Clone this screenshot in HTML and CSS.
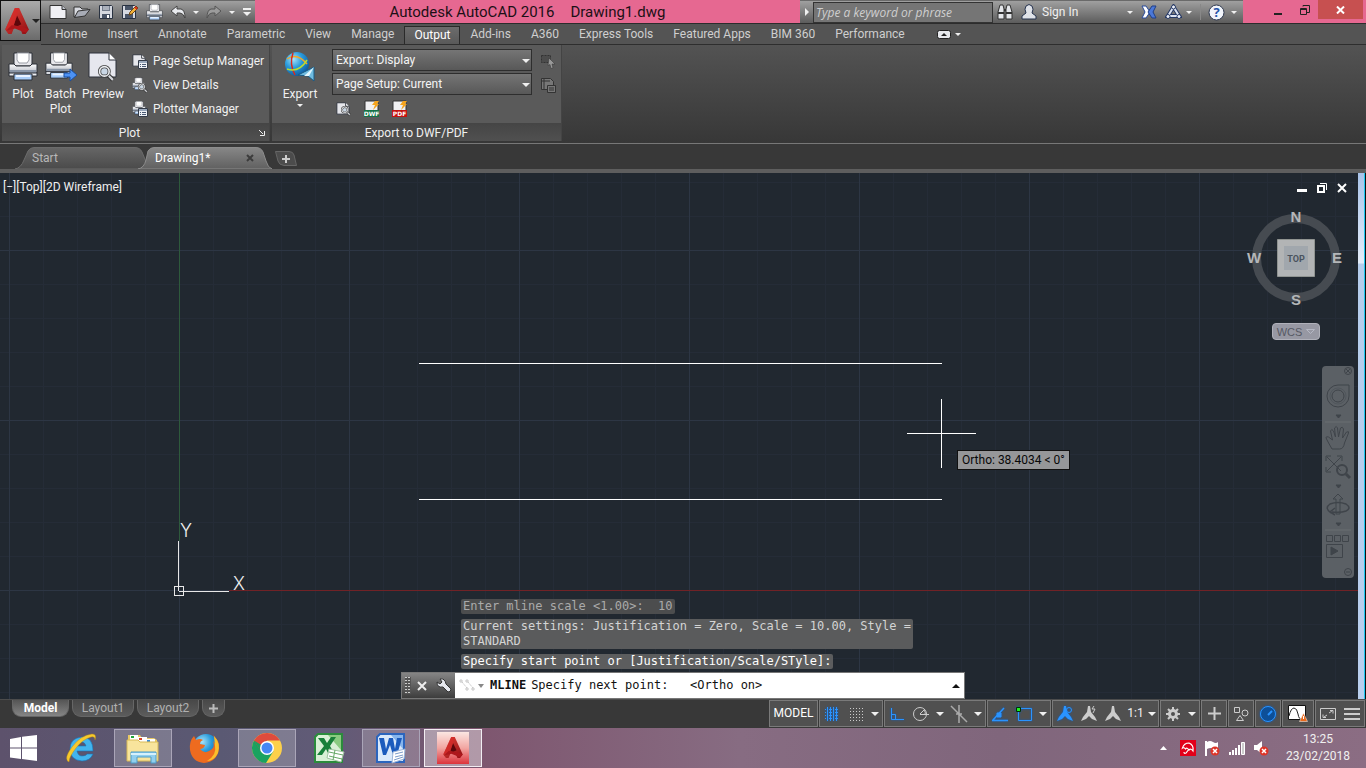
FILE: index.html
```html
<!DOCTYPE html>
<html lang="en">
<head>
  <meta charset="UTF-8">
  <title>Autodesk AutoCAD 2016 - Drawing1.dwg</title>
  <link rel="stylesheet" href="styles.css">
</head>
<body>
<!-- shared icon shapes and gradients -->
<svg class="defs" width="0" height="0" aria-hidden="true">
  <defs>
    <linearGradient id="silver" x1="0" y1="0" x2="0" y2="1">
      <stop offset="0" stop-color="#ffffff"/><stop offset="1" stop-color="#b4b8c2"/>
    </linearGradient>
    <linearGradient id="tabOff" x1="0" y1="0" x2="0" y2="1">
      <stop offset="0" stop-color="#666666"/><stop offset="1" stop-color="#4a4a4a"/>
    </linearGradient>
    <linearGradient id="tabOn" x1="0" y1="0" x2="0" y2="1">
      <stop offset="0" stop-color="#878787"/><stop offset="1" stop-color="#606060"/>
    </linearGradient>
    <linearGradient id="red" x1="0" y1="0" x2="1" y2="1">
      <stop offset="0" stop-color="#e8463c"/><stop offset="1" stop-color="#8e0d12"/>
    </linearGradient>
    <radialGradient id="globe" cx=".35" cy=".3" r=".8">
      <stop offset="0" stop-color="#a5e3fa"/><stop offset=".45" stop-color="#2a9bdc"/><stop offset="1" stop-color="#0b4f94"/>
    </radialGradient>
  </defs>
  <symbol id="printer" viewBox="0 0 30 30">
    <path d="M6 1h18v13H6z" fill="#e8e8ec" stroke="#2a2e36"/>
    <path d="M9 1v7l2 3h8l2-3V1z" fill="#fff" stroke="#9a9da5"/>
    <path d="M1 12h5l2 2h14l2-2h5v9H1z" fill="url(#silver)" stroke="#2a2e36"/>
    <path d="M2 18h26v4H2z" fill="#8b97a8"/><path d="M1 21h28v3H1z" fill="#eceef2" stroke="#2a2e36"/>
    <path d="M6 22h18v6H6z" fill="#a9cdf8" stroke="#2a2e36"/><path d="M8 23h14v2H8z" fill="#eaf3ff"/>
  </symbol>
  <symbol id="lens" viewBox="0 0 16 16">
    <path d="M9 9l5 5" stroke="#333" stroke-width="4"/><path d="M9 9l5 5" stroke="#d5d7dc" stroke-width="2"/>
    <circle cx="6" cy="6" r="4.500" fill="#c9d6e4" stroke="#444" stroke-width="3"/><circle cx="6" cy="6" r="4.500" fill="none" stroke="#eceef2" stroke-width="1.500"/>
  </symbol>
  <symbol id="page" viewBox="0 0 16 16">
    <path d="M1 2h10l4 4v9H1z" fill="#e6e7ec" stroke="#2c303a"/><path d="M11 2v4h4" fill="#fff" stroke="#2c303a"/>
  </symbol>
  <symbol id="list" viewBox="0 0 10 9">
    <path d="M.5.5h9v8h-9z" fill="#eef1f6" stroke="#333b48"/><path d="M1 1h8v2H1z" fill="#9aa9bd"/><path d="M2 4.500h1M4 4.500h4M2 6.500h1M4 6.500h4" stroke="#4a5a74"/>
  </symbol>
  <symbol id="logoA" viewBox="0 0 24 26">
    <path d="M10 1h4l9 20-3 4h-3l-2-5-3-1-3 1-2 5H4l-3-4z" fill="url(#red)"/>
    <path d="M12 8l4 8-4 2-3-1z" fill="#5c070b"/><path d="M10 1L1 21l8-4 3-9 2-7z" fill="#d32a28" opacity=".7"/><path d="M7 17l10 1 6 3-3 3-10-4-8 2z" fill="#ad171b"/>
  </symbol>
  <symbol id="man" viewBox="0 0 18 18">
    <path d="M8 1h2l1 6 4 5 2 4-5-2-3-3-3 3-5 2 2-4 4-5z" fill="currentColor"/>
  </symbol>
</svg>

<header class="top">
  <button class="app-button" aria-label="Application menu">
    <svg width="26" height="28"><use href="#logoA"/></svg><i class="arrow dark"></i>
  </button>
  <div class="title-bar">
    <div class="quick">
      <button aria-label="New"><svg width="18" height="16" viewBox="0 0 18 16"><path d="M1 1.500h12l4 4v9H1z" fill="#f0f0f4" stroke="#333"/><path d="M13 1.500v4h4" fill="#bfc3cc" stroke="#333"/></svg></button>
      <button aria-label="Open"><svg width="18" height="16" viewBox="0 0 18 16"><path d="M1 13V3h6l2 2h6v3z" fill="#d8dae0" stroke="#333"/><path d="M1.500 13.500L5 7l12-1.500-5 6.500z" fill="#a8acb6" stroke="#333"/></svg></button>
      <button aria-label="Save"><svg width="16" height="16" viewBox="0 0 16 16"><path d="M1.500 1.500h12l1 1v12h-13z" fill="#d5d8e0" stroke="#293241"/><path d="M4 2h8v5H4z" fill="#727b8b"/><path d="M5 3h6M5 5h6" stroke="#e4e7ec"/><path d="M4 10h8v4H4z" fill="#4a5568"/><path d="M9 11h2v3H9z" fill="#fff"/></svg></button>
      <button aria-label="Save As"><svg width="18" height="16" viewBox="0 0 18 16"><path d="M1.500 1.500h12l1 1v12h-13z" fill="#d5d8e0" stroke="#293241"/><path d="M4 2h8v4H4zM4 10h8v4H4z" fill="#4a5568"/><path d="M8 11l1-3 6-6 2 2-6 6z" fill="#f5b33a" stroke="#6b4513"/><path d="M14 3l2 2" stroke="#d42a1c" stroke-width="2"/></svg></button>
      <button aria-label="Plot"><svg width="17" height="17"><use href="#printer"/></svg></button>
      <button aria-label="Undo"><svg width="16" height="14" viewBox="0 0 16 14"><path d="M1 6l6-5v3h4q4 1 4 9-2-5-5-5H7v3z" fill="#e8eaee" stroke="#444"/></svg></button>
      <button class="slim" aria-label="Undo history"><i class="arrow"></i></button>
      <button aria-label="Redo"><svg width="16" height="14" viewBox="0 0 16 14"><path d="M15 6L9 1v3H5Q1 5 1 13q2-5 5-5h3v3z" fill="#9b9b9b" stroke="#555"/></svg></button>
      <button class="slim" aria-label="Redo history"><i class="arrow"></i></button>
      <button class="customize" aria-label="Customize toolbar"><i class="arrow big"></i></button>
    </div>
    <h1 class="title"><span>Autodesk AutoCAD 2016</span><span>Drawing1.dwg</span></h1>
    <div class="info">
      <button class="expand" aria-label="Collapse search"><i class="arrow right"></i></button>
      <input type="text" placeholder="Type a keyword or phrase" aria-label="Search">
      <button aria-label="Search"><svg width="16" height="16" viewBox="0 0 16 16"><path d="M3 1h3l1 4v10H1V8zM13 1h-3L9 5v10h6V8z" fill="#e4e6ea" stroke="#333"/><path d="M1 9h6M9 9h6M7 6h2" stroke="#333" stroke-width="2"/></svg></button>
      <button class="sign-in"><svg width="16" height="16" viewBox="0 0 16 16"><path d="M5 9Q3 5 5 2q3-3 6 0 2 3 0 7l4 3v3H1v-3z" fill="#dfe2e8" stroke="#25324d"/></svg>Sign In<i class="arrow"></i></button>
      <button aria-label="Exchange apps"><svg width="16" height="16" viewBox="0 0 16 16"><path d="M1 2h4l4 6-4 6H1l3-6z" fill="#fff" stroke="#294b9b"/><path d="M15 2h-4L7 8l4 6h4l-3-6z" fill="#4b78d8" stroke="#203f86"/></svg></button>
      <button class="a360" aria-label="Stay connected"><svg width="17" height="16" viewBox="0 0 17 16"><path d="M8.500 3L3 12h11z" fill="none" stroke="#263965" stroke-width="4"/><path d="M8.500 3L3 12h11z" fill="none" stroke="#dde4f2" stroke-width="2"/><g fill="#eef2fa" stroke="#263965"><circle cx="8.500" cy="3" r="2"/><circle cx="3" cy="12.500" r="2"/><circle cx="14" cy="12.500" r="2"/></g></svg><i class="arrow"></i></button>
      <button class="help" aria-label="Help"><svg width="17" height="17" viewBox="0 0 17 17"><circle cx="8.500" cy="8.500" r="7.500" fill="#f2f5fb" stroke="#303a50"/><text x="8.500" y="13" text-anchor="middle" class="help-mark">?</text></svg><i class="arrow"></i></button>
    </div>
    <div class="window-buttons">
      <button aria-label="Minimize"><svg width="10" height="10"><path d="M1 8h8v2H1z" fill="#222"/></svg></button>
      <button aria-label="Restore"><svg width="10" height="10" viewBox="0 0 10 10" fill="none" stroke="#222"><path d="M.5 3.500h6v6h-6zM1 4.500h6M3 1.500V.5h6.500v7H7"/></svg></button>
      <button class="close" aria-label="Close"><svg width="9" height="8" viewBox="0 0 9 8"><path d="M1 .5l7 7M8 .5l-7 7" stroke="#fff" stroke-width="2"/></svg></button>
    </div>
  </div>
  <nav class="ribbon-tabs">
    <button>Home</button><button>Insert</button><button>Annotate</button><button>Parametric</button><button>View</button><button>Manage</button><button class="active">Output</button><button>Add-ins</button><button>A360</button><button>Express Tools</button><button>Featured Apps</button><button>BIM 360</button><button>Performance</button>
    <button class="minimize" aria-label="Minimize ribbon"><svg width="14" height="9" viewBox="0 0 14 9"><rect x=".5" y=".5" width="13" height="8" rx="2" fill="#e6e8ec" stroke="#222"/><path d="M4 6l3-3 3 3z" fill="#222"/></svg><i class="arrow"></i></button>
  </nav>
</header>

<section class="ribbon">
  <div class="panel plot">
    <div class="panel-body">
      <button class="large"><svg width="30" height="30"><use href="#printer"/></svg>Plot</button>
      <button class="large batch"><svg width="32" height="30" viewBox="0 0 32 30"><use href="#printer" width="28" height="28"/><path d="M19 21h6v-4l7 6-7 6v-4h-6z" fill="#4c92f5" stroke="#1b4e9e"/></svg>Batch Plot</button>
      <button class="large"><svg width="30" height="30" viewBox="0 0 30 30"><path d="M1 1h20l7 7v17H1z" fill="#e6e7ee" stroke="#2c303a"/><path d="M21 1v7h7" fill="#fff" stroke="#2c303a"/><use href="#lens" x="10" y="13" width="17" height="17"/></svg>Preview</button>
      <ul class="small-buttons">
        <li><button><svg width="16" height="16"><use href="#page" width="14" height="14"/><use href="#list" x="6" y="7" width="10" height="9"/></svg>Page Setup Manager</button></li>
        <li><button><svg width="16" height="16"><use href="#printer" width="13" height="14"/><use href="#lens" x="6" y="6" width="10" height="10"/></svg>View Details</button></li>
        <li><button><svg width="16" height="16"><use href="#printer" width="14" height="14"/><use href="#list" x="6" y="7" width="10" height="9"/></svg>Plotter Manager</button></li>
      </ul>
    </div>
    <div class="panel-title">Plot<svg class="launcher" width="6" height="6" viewBox="0 0 6 6"><path d="M0 0l4 4M5.500 1v4.500H1" fill="none" stroke="#eee"/></svg></div>
  </div>
  <div class="panel export">
    <div class="panel-body">
      <button class="large"><svg width="32" height="32" viewBox="0 0 32 32"><circle cx="13" cy="13" r="12" fill="url(#globe)"/><path d="M3 8q10-7 20 5" fill="none" stroke="#f6a623" stroke-width="1.500"/><path d="M9 2q-4 11 2 22" fill="none" stroke="#d92a1f" stroke-width="1.500"/><path d="M3 18q12 4 20-9" fill="none" stroke="#b9dd33" stroke-width="1.500"/><path d="M14 24l16-8v14l-6-5z" fill="#6fbbe0" stroke="#195b86"/><path d="M20 25l10-9-5 9z" fill="#e1f6fd"/></svg>Export<i class="arrow"></i></button>
      <div class="export-options">
        <label class="select"><select aria-label="What to export"><option>Export: Display</option></select></label>
        <label class="select"><select aria-label="Page setup"><option>Page Setup: Current</option></select></label>
        <div class="export-tools">
          <button aria-label="Preview"><svg width="16" height="16"><use href="#page" width="14" height="14"/><use href="#lens" x="5" y="5" width="10" height="10"/></svg></button>
          <button aria-label="DWF"><svg width="16" height="17" viewBox="0 0 16 17"><path d="M1 1h13v11H1z" fill="#f0f0f2" stroke="#333"/><path d="M11 1l4 0-2 3h2l-6 6 2-5H8z" fill="#f6a41c"/><path d="M0 10h15v7H0z" fill="#157347"/><text x="7.500" y="16" class="badge">DWF</text></svg></button>
          <button aria-label="PDF"><svg width="16" height="17" viewBox="0 0 16 17"><path d="M1 1h13v11H1z" fill="#f0f0f2" stroke="#333"/><path d="M11 1l4 0-2 3h2l-6 6 2-5H8z" fill="#f6a41c"/><path d="M0 10h15v7H0z" fill="#c4120f"/><text x="7.500" y="16" class="badge">PDF</text></svg></button>
        </div>
      </div>
      <div class="export-side">
        <button aria-label="Pick window" disabled><svg width="16" height="16" viewBox="0 0 16 16"><path d="M1.500 2.500h9v7h-9z" fill="#4c4c4c" stroke="#333" stroke-dasharray="2 1"/><path d="M9 5l6 6h-3l1 4-2 .5-1-4-2 1z" fill="#999" stroke="#333" stroke-width=".5"/></svg></button>
        <button aria-label="Page setup override" disabled><svg width="16" height="16" viewBox="0 0 16 16" fill="#777" stroke="#333"><path d="M1.500 1.500h9l3 3v8h-12zM4 2v10M2 4h8"/><path d="M7.500 8.500h8v7h-8zM9 11h5M9 13h5"/></svg></button>
      </div>
    </div>
    <div class="panel-title">Export to DWF/PDF</div>
  </div>
</section>

<nav class="file-tabs">
  <button class="file-tab"><svg class="tab-shape" viewBox="0 0 134 22" preserveAspectRatio="none"><path d="M0 22Q6 21 9 13L13 4Q15 .5 19 .5H120Q125 .5 127 5L134 22z" fill="url(#tabOff)" stroke="#6b6b6b"/></svg><span>Start</span></button>
  <button class="file-tab active"><svg class="tab-shape" viewBox="0 0 134 22" preserveAspectRatio="none"><path d="M0 22Q6 21 8 13L10 4Q12 .5 16 .5H118Q123 .5 125 5L128 14Q130 21 134 22z" fill="url(#tabOn)" stroke="#8c8c8c"/></svg><span>Drawing1*</span><svg width="8" height="8" viewBox="0 0 8 8"><path d="M1 1l6 6M7 1L1 7" stroke="#3c3c3c" stroke-width="2"/></svg></button>
  <button class="new-tab" aria-label="New drawing"><svg width="22" height="15" viewBox="0 0 22 15"><path d="M.5.5H14Q18 .5 19 4L21.500 14.500H9Q4 14 3 10z" fill="#4c4c4c" stroke="#666"/><path d="M11 4v8M7 8h8" stroke="#ccc" stroke-width="2"/></svg></button>
</nav>

<main class="workspace">
  <div class="canvas">
    <svg class="drawing" width="100%" height="100%" fill="none" shape-rendering="crispEdges">
      <path d="M179.500 0v368" stroke="#2e5a3c"/>
      <line x1="229" y1="417.500" x2="100%" y2="417.500" stroke="#712226"/>
      <g stroke="#fff">
        <path d="M419 190.500h523M419 326.500h523"/>
        <path d="M941.500 226v69M907 260.500h69"/>
      </g>
      <!-- UCS icon -->
      <path d="M178.500 368v50M179 418.500h50M174.500 413.500h9v9h-9z" stroke="#e8e8e8"/>
      <text x="186" y="364" class="axis">Y</text>
      <text x="239" y="417" class="axis">X</text>
    </svg>
    <div class="view-label">[−][Top][2D Wireframe]</div>
    <div class="view-buttons">
      <button aria-label="Minimize view"><svg width="12" height="12"><path d="M1 7h10v3H1z" fill="#fff"/></svg></button>
      <button aria-label="Restore view"><svg width="12" height="12" viewBox="0 0 12 12" fill="none" stroke="#fff"><path d="M2 4h6v6H2z" stroke-width="2"/><path d="M4 1.500h6.500V8"/></svg></button>
      <button aria-label="Close view"><svg width="12" height="12"><path d="M2 2l8 8M10 2l-8 8" stroke="#fff" stroke-width="2"/></svg></button>
    </div>
    <div class="view-cube">
      <svg width="110" height="104" viewBox="0 0 110 104">
        <circle cx="55" cy="52" r="39.500" fill="none" stroke="#464b51" stroke-width="9"/>
        <path d="M36.500 33.500h37v37h-37z" fill="#b2b4b5" stroke="#909491"/><path d="M43 40h24v24H43z" fill="#a1a7ad"/>
        <text x="55" y="56" class="cube-face">TOP</text>
        <g class="compass"><text x="55" y="16">N</text><text x="96" y="57">E</text><text x="55" y="99">S</text><text x="13" y="57">W</text></g>
      </svg>
      <button class="wcs">WCS<svg width="9" height="5" viewBox="0 0 9 5"><path d="M.5.5h8l-4 4z" fill="none" stroke="#b5b8c4"/></svg></button>
    </div>
    <div class="nav-bar">
      <svg width="32" height="212" viewBox="0 0 32 212" fill="none" stroke="#3f444a">
        <circle cx="26" cy="5" r="3.500"/><path d="M24 3l4 4M28 3l-4 4"/>
        <path d="M16 19h11v11a11 11 0 1 1-11-11z"/><circle cx="16" cy="30" r="6"/><circle cx="16" cy="30" r="8" stroke="#50565c"/>
        <path d="M14 49h5l-2.500 3zM14 119h5l-2.500 3zM14 157h5l-2.500 3z" fill="#3f444a"/>
        <path d="M3 56h26M3 164h26" stroke="#6a6e72"/>
        <path d="M10 83Q6 76 4.500 73t2-2l4 3-2-9q1-3 3 0l2 6-1-9q2-3 3 0l1 9 2-9q2-2 3 1l-1 9 4-6q3-1 2 1l-4 10q-1 6-5 6z"/>
        <path d="M5 91l14 14M19 91L5 105M4 95v-5h5M15 90h5v5M4 101v5h5"/><circle cx="20" cy="104" r="5" stroke-width="2"/><path d="M24 108l4 4" stroke-width="3"/>
        <path d="M14 148v-15h-3l5-5 5 5h-3v15z"/><path d="M9 147Q2 142 8 138q8-3 16 0 6 4 0 7-5 2-14 1M13 142l-5 4 5 3" stroke-width="1.500"/>
        <path d="M4.500 169.500h6v6h-6zM12.500 169.500h6v6h-6zM20.500 169.500h6v6h-6zM4.500 178.500h16v13h-16z"/><path d="M9 181l7 4-7 4z" fill="#3f444a"/>
        <circle cx="26" cy="206" r="3.500"/><path d="M24 206h4"/>
      </svg>
    </div>
    <div class="ortho-tip">Ortho: 38.4034 &lt; 0°</div>
    <div class="command">
      <div class="history">
        <p class="old">Enter mline scale &lt;1.00&gt;:&nbsp; 10</p>
        <p class="mid">Current settings: Justification = Zero, Scale = 10.00, Style =<br>STANDARD</p>
        <p>Specify start point or [Justification/Scale/STyle]:</p>
      </div>
      <div class="command-line">
        <div class="handle"></div>
        <button aria-label="Close command line"><svg width="10" height="10"><path d="M1 1l8 8M9 1L1 9" stroke="#eee" stroke-width="2"/></svg></button>
        <button aria-label="Customize"><svg width="16" height="16" viewBox="0 0 16 16"><path d="M1 4l3 2 2-2-2-3q5-1 6 5l5 5q0 3-3 3l-5-5Q1 10 1 4z" fill="#e6e8ee" stroke="#333"/></svg></button>
        <div class="prompt">
          <svg width="26" height="14" viewBox="0 0 26 14" fill="none" stroke="#c8c8c8"><path d="M1 1h2v2H1zM7 1h2v2H7zM7 9h2v2H7zM13 9h2v2h-2z"/><path d="M3 3l5 6M9 3l5 6" stroke-dasharray="2 1"/><path d="M19 5h6l-3 4z" fill="#888" stroke="none"/></svg>
          <b>MLINE</b><span>Specify next point:&nbsp;&nbsp; &lt;Ortho on&gt;</span>
          <i class="arrow up"></i>
        </div>
      </div>
    </div>
  </div>
  <div class="desktop-edge"></div>
</main>

<footer class="status">
  <nav class="layout-tabs">
    <button class="active">Model</button><button>Layout1</button><button>Layout2</button><button class="add" aria-label="New layout"><svg width="9" height="9"><path d="M4.500 0v9M0 4.500h9" stroke="#bbb" stroke-width="2"/></svg></button>
  </nav>
  <div class="status-tools">
    <div class="group"><button>MODEL</button></div>
    <div class="group">
      <button aria-label="Grid"><svg class="glow" width="16" height="16" viewBox="0 0 16 16" stroke="#2a94ff"><path d="M3.500 1v14M6.500 1v14M9.500 1v14M12.500 1v14"/><path d="M1 3.500h14M1 6.500h14M1 9.500h14M1 12.500h14" stroke-dasharray="1 1"/></svg></button>
      <button aria-label="Snap"><svg width="16" height="16" viewBox="0 0 16 16" stroke="#ccc" stroke-dasharray="1 2"><path d="M2 2.500h13M2 5.500h13M2 8.500h13M2 11.500h13M2 14.500h13"/></svg></button>
      <button class="drop" aria-label="Snap settings"><i class="arrow big"></i></button>
    </div>
    <div class="group">
      <button aria-label="Ortho"><svg class="glow" width="16" height="16" viewBox="0 0 16 16" fill="none" stroke="#2a94ff"><path d="M2.500 2v11.500H15M2.500 8.500h4v5"/></svg></button>
      <button aria-label="Polar"><svg width="18" height="16" viewBox="0 0 18 16" fill="none" stroke="#ccc"><circle cx="8" cy="8" r="6.500"/><path d="M8 8.500h9M8 8l5-5M12 4q2 2 1 5"/></svg></button>
      <button class="drop" aria-label="Polar settings"><i class="arrow big"></i></button>
      <button aria-label="Isodraft"><svg width="18" height="20" viewBox="0 0 18 20" stroke="#aaa" stroke-width="1.500"><path d="M1 2l16 16M9 1v18M6 10h6"/></svg></button>
      <button class="drop" aria-label="Isodraft settings"><i class="arrow big"></i></button>
    </div>
    <div class="group">
      <button aria-label="Snap tracking"><svg class="glow" width="18" height="16" viewBox="0 0 18 16" fill="none" stroke="#2a94ff"><path d="M1 14.500h16M2 14L13 2" stroke-width="1.500"/><path d="M6 7h4v4H6z" fill="#2a94ff"/></svg></button>
      <button aria-label="Object snap"><svg class="glow" width="18" height="18" viewBox="0 0 18 18"><path d="M3.500 3.500h13v12h-13z" fill="none" stroke="#2a94ff"/><path d="M1.500 2.500h4v4h-4z" fill="#1ef01e" stroke="#022c02"/></svg></button>
      <button class="drop" aria-label="Object snap settings"><i class="arrow big"></i></button>
    </div>
    <div class="group">
      <button class="blue" aria-label="Annotation visibility"><svg class="glow" width="18" height="18"><use href="#man"/><circle cx="13" cy="5" r="2.500" fill="none" stroke="#2a94ff"/></svg></button>
      <button aria-label="Auto scale"><svg width="18" height="18"><use href="#man"/><path d="M14 1l-2 3h3l-2 4" fill="none" stroke="#ccc"/></svg></button>
      <button aria-label="Annotation scale"><svg width="18" height="18"><use href="#man"/></svg></button>
      <button class="scale">1:1<i class="arrow big"></i></button>
    </div>
    <div class="group">
      <button aria-label="Workspace"><svg width="14" height="14" viewBox="0 0 14 14"><circle cx="7" cy="7" r="3.500" fill="none" stroke="#ccc" stroke-width="3"/><path d="M7 0v3M7 11v3M0 7h3M11 7h3M2 2l2 2M10 10l2 2M12 2l-2 2M4 10l-2 2" stroke="#ccc" stroke-width="2"/></svg></button>
      <button class="drop" aria-label="Workspace settings"><i class="arrow big"></i></button>
    </div>
    <div class="group"><button aria-label="Annotation monitor"><svg width="15" height="15"><path d="M7.500 1v13M1 7.500h13" stroke="#ccc" stroke-width="2"/></svg></button></div>
    <div class="group"><button aria-label="Isolate objects"><svg width="16" height="16" viewBox="0 0 16 16" fill="none" stroke="#ccc"><path d="M1.500 1.500h5v5h-5z"/><circle cx="12" cy="7" r="3"/><path d="M3.500 14.500l3.500-5 3.500 5z"/></svg></button></div>
    <div class="group"><button aria-label="Hardware acceleration"><svg class="glow" width="18" height="18"><circle cx="9" cy="9" r="7.500" fill="#0d4f98" stroke="#2a94ff"/><path d="M9 10l4-4" stroke="#2a94ff" stroke-width="2"/></svg></button></div>
    <div class="group wide"><button aria-label="Performance"><svg width="20" height="17" viewBox="0 0 20 17"><path d="M.5.5h17v14H.5z" fill="#fff" stroke="#111"/><path d="M1 11Q3 3 6 3t4 6 4 5" fill="none" stroke="#222"/><path d="M15.500 8l4 8.500h-8z" fill="#e8691c" stroke="#fff" stroke-width=".5"/><path d="M15.500 11v3" stroke="#fff"/></svg></button></div>
    <div class="group">
      <button aria-label="Clean screen"><svg width="16" height="12" viewBox="0 0 16 12" fill="none" stroke="#ccc"><path d="M.5.5h15v11H.5zM9 5l3-2M10 2.500h3v3M7 7L4 9M3 6.500v3h3"/></svg></button>
      <button aria-label="Customization"><svg width="16" height="12"><path d="M0 1h16M0 6h16M0 11h16" stroke="#ccc" stroke-width="2"/></svg></button>
    </div>
  </div>
</footer>

<div class="taskbar">
  <button class="start" aria-label="Start"><svg width="28" height="26" viewBox="0 0 28 26" fill="#fff"><path d="M0 4l11-2v10.500H0zM12 1.800L27 0v12.500H12zM0 13.500h11V24L0 22.500zM12 13.500h15V26l-15-2z"/></svg></button>
  <button aria-label="Internet Explorer"><svg width="32" height="32" viewBox="0 0 32 32"><path d="M28 19H12q1 5 5 5t5-2h6q-3 7-11 7Q5 28 5 17T17 5q11 0 11 14zM12 14h9q-1-4-4.500-4T12 14z" fill="#42b4ee" stroke="#1676b8" stroke-width=".6"/><path d="M4 30q-6-3 3-15T27 2q5 0 3 6 0-4-4-3-8 2-15 11T4 30z" fill="#f7c92d" stroke="#b98b10" stroke-width=".4"/></svg></button>
  <button class="open" aria-label="File Explorer"><svg width="34" height="32" viewBox="0 0 34 32"><path d="M2 3h12l2 3h12l3 2v20H2z" fill="#e8c965"/><path d="M4 3h8v5H4zM12 5h9v5h-9zM20 7h9v4h-9z" fill="#fff"/><path d="M5 4h3v2H5z" fill="#21a63a"/><path d="M13 6h3v2h-3z" fill="#d84126"/><path d="M21 8h3v2h-3z" fill="#3a8dd8"/><path d="M1 8h11l2 2h18v19H1z" fill="#f8e49c" stroke="#d8b957"/><path d="M5 20h25v11h-5v-6H11v6H5z" fill="#91cfee" stroke="#4c9cc8"/><path d="M5 22h25" stroke="#d6f1fc" stroke-width="2"/></svg></button>
  <button aria-label="Firefox"><svg width="32" height="32" viewBox="0 0 32 32"><circle cx="17" cy="15" r="13" fill="url(#globe)"/><path d="M24 3q7 6 6 14-2 13-15 14Q3 30 1 18 0 9 5 4l2 4q4-2 7 0-3 1-3 4l5 1q-1 4-5 4 4 5 9 2 7-3 4-10 3 3 3 6 1-6-3-12z" fill="#ee6b1f"/><path d="M25 4q7 7 4 17-4 8-11 8 10-6 8-15z" fill="#f9bf2b"/></svg></button>
  <button class="open" aria-label="Chrome"><svg width="32" height="32" viewBox="0 0 32 32"><circle cx="16" cy="16" r="15" fill="#fcd04b"/><path d="M3 8.500A15 15 0 0 0 15 31l7.500-12L16 16z" fill="#1aa260"/><path d="M3 8.500A15 15 0 0 1 29 8.500H16l-6 11z" fill="#df4b3d"/><path d="M3 8.500l7 11 6-3z" fill="#1aa260"/><circle cx="16" cy="16" r="7" fill="#fff"/><circle cx="16" cy="16" r="5.500" fill="#4687f4"/></svg></button>
  <button aria-label="Excel"><svg width="32" height="32" viewBox="0 0 32 32"><path d="M5 2h24v28H2V5z" fill="#d9f0d5" stroke="#2b8b3c" stroke-width="2"/><path d="M15 3h13v15z" fill="#8acb80"/><path d="M5 6h6l3 5 4-6h5l-6 9 5 9h-6l-3-6-4 6H4l7-9z" fill="#188039"/><path d="M16 17l15 3-3 10-14-4z" fill="#fff" stroke="#9fc39f"/><path d="M16 20l14 3M16 24l13 3M22 18l-2 10" stroke="#67a867"/></svg></button>
  <button class="open" aria-label="Word"><svg width="32" height="32" viewBox="0 0 32 32"><path d="M5 2h24v28H2V5z" fill="#d9e9fb" stroke="#2c65bd" stroke-width="2"/><path d="M16 3h12v14z" fill="#86b5ed"/><path d="M4 6h5l2 11 3-11h4l2 11 2-11h5l-5 17h-4l-3-10-4 10H8z" fill="#1b5bbd"/><path d="M18 20l12-3-1 10-12 4z" fill="#fff" stroke="#9db6d8"/><path d="M20 22l8-2M20 25l8-2M19 28l9-3" stroke="#7a9bc9"/></svg></button>
  <button class="open current" aria-label="AutoCAD"><svg width="32" height="32" viewBox="0 0 32 32"><defs><linearGradient id="acad" x1="0" y1="0" x2="0" y2="1"><stop offset="0" stop-color="#fbe6e2"/><stop offset=".5" stop-color="#f2a6a2"/><stop offset="1" stop-color="#dc333b"/></linearGradient></defs><path d="M0 0h32v32H0z" fill="url(#acad)"/><use href="#logoA" x="5" y="4" width="22" height="23"/></svg></button>
  <div class="tray">
    <svg class="show-hidden" width="9" height="6"><path d="M1 5l3.500-4L8 5z" fill="#fff"/></svg>
    <svg width="16" height="16" viewBox="0 0 16 16"><path d="M0 0h16v16H0z" fill="#e2001a"/><path d="M2.500 8Q4 3 9 3q5 2 4 8-2-3-4-1-2-3-3.500-1Q4 7 2.500 8zM9 9l-3 4q-2 1-2-1" fill="none" stroke="#fff" stroke-width="1.200"/></svg>
    <svg width="17" height="16" viewBox="0 0 17 16"><path d="M2 1v15" stroke="#fff" stroke-width="2"/><path d="M3 2q3-2 6 0t5 0v7q-3 2-5 0T3 9z" fill="#fff"/><circle cx="11" cy="11" r="4.500" fill="#dd3528"/><path d="M9 9l4 4M13 9l-4 4" stroke="#fff" stroke-width="1.500"/></svg>
    <svg width="16" height="14" viewBox="0 0 16 14" fill="#fff"><path d="M0 11h2v3H0zM3 9h2v5H3zM6 7h2v7H6zM9 4h2v10H9z"/><path d="M12.500 1.500h3v12h-3z" fill="#ccc" stroke="#fff"/></svg>
    <svg width="17" height="16" viewBox="0 0 17 16"><path d="M1 5h3l5-4v13l-5-4H1z" fill="#fff"/><circle cx="11" cy="11" r="4.500" fill="#dd3528"/><path d="M9 9l4 4M13 9l-4 4" stroke="#fff" stroke-width="1.500"/></svg>
  </div>
  <div class="clock"><time>13:25</time><time>23/02/2018</time></div>
</div>
</body>
</html>
```
FILE: styles.css
```css
* {
  box-sizing: border-box;
}

html, body {
  height: 100%;
}

body {
  margin: 0;
  display: flex;
  flex-direction: column;
  overflow: hidden;
  background: #383838;
  color: #f0f0f0;
  font: 12px/15px Roboto, "Open Sans", sans-serif;
}

h1, p, ul {
  margin: 0;
  padding: 0;
  list-style: none;
}

button {
  display: flex;
  align-items: center;
  justify-content: center;
  margin: 0;
  padding: 0;
  border: 0;
  background: none;
  color: inherit;
  font: inherit;
  white-space: nowrap;
}

svg {
  flex: none;
}

.defs {
  position: absolute;
}

/* small triangles */
.arrow {
  flex: none;
  width: 0;
  height: 0;
  border: 3px solid transparent;
  border-top-color: #f0f0f0;
  border-bottom: 0;
}

.arrow.big {
  border-width: 4px;
  border-bottom: 0;
}

.arrow.dark {
  border-width: 4px;
  border-bottom: 0;
  border-top-color: #222;
}

.arrow.right {
  border: 4px solid transparent;
  border-left-color: #f0f0f0;
  border-right: 0;
}

.arrow.up {
  border: 4px solid transparent;
  border-bottom-color: #111;
  border-top: 0;
}

/* title bar and ribbon tabs */
.top {
  flex: none;
  display: grid;
  grid-template-columns: 41px 1fr;
  grid-template-rows: 24px 21px;
  background: #545454;
}

.app-button {
  grid-row: 1 / 3;
  height: 41px;
  gap: 2px;
  padding-left: 2px;
  border: 1px solid #111;
  background: linear-gradient(#aaaaaa, #6b6b6b);
}

.title-bar {
  display: flex;
  background: #e66891;
  border-bottom: 1px solid #2c2c2c;
}

.quick, .info {
  display: flex;
  align-items: center;
  background: linear-gradient(#a0a0a0, #5c5c5c);
  border-top: 1px solid #6a6a6a;
}

.quick {
  width: 214px;
  padding-left: 5px;
}

.quick button {
  width: 24px;
}

.quick .slim {
  width: 12px;
}

.quick .customize {
  width: 17px;
  flex-direction: column;
}

.customize::before {
  content: "";
  width: 8px;
  height: 2px;
  margin-bottom: 2px;
  background: #f0f0f0;
}

.title {
  flex: 1;
  display: flex;
  justify-content: center;
  gap: 16px;
  color: #1c1016;
  font-size: 15px;
  font-weight: normal;
  line-height: 24px;
}

.info {
  width: 443px;
}

.info .expand {
  width: 13px;
}

.info input {
  width: 180px;
  height: 21px;
  padding: 0 2px;
  border: 1px solid #333;
  background: #757575;
  color: #eee;
  font: italic 12px "Open Sans", sans-serif;
}

.info input::placeholder {
  color: #cfcfcf;
}

.info > button {
  width: 24px;
}

.info .expand {
  width: 13px;
}

.info .sign-in {
  flex: 1;
  gap: 5px;
  padding: 0 4px;
}

.sign-in .arrow {
  margin-left: auto;
}

.info .a360 {
  width: 40px;
  gap: 4px;
  padding-right: 5px;
  border-right: 1px solid #888;
}

.info .help {
  width: 42px;
  gap: 6px;
}

.help-mark {
  fill: #2552a8;
  font: bold 13px "Open Sans", sans-serif;
}

.window-buttons {
  display: flex;
  width: 123px;
  justify-content: flex-end;
  padding-right: 3px;
}

.window-buttons button {
  width: 27px;
  height: 19px;
}

.window-buttons .close {
  width: 45px;
  background: #c75050;
}

.ribbon-tabs {
  display: flex;
  align-items: flex-end;
  padding-left: 4px;
  border-bottom: 1px solid #2e2e2e;
  color: #cfcfcf;
}

.ribbon-tabs button {
  height: 20px;
  padding: 0 9px;
  border: 1px solid transparent;
  border-bottom: 0;
}

.ribbon-tabs .active {
  height: 18px;
  border-color: #2a2a2a;
  background: linear-gradient(#6c6c6c, #595959);
  color: #fff;
}

.ribbon-tabs .minimize {
  gap: 4px;
  margin-left: 12px;
}

/* ribbon */
.ribbon {
  flex: none;
  display: flex;
  height: 99px;
  padding: 0 2px 2px;
  gap: 2px;
  background: linear-gradient(#535353, #373737);
  border-bottom: 1px solid #777;
}

.panel {
  display: flex;
  flex-direction: column;
  background: #5a5a5a;
  border-right: 1px solid #444;
}

.plot {
  width: 268px;
}

.export {
  width: 290px;
}

.panel-body {
  flex: 1;
  display: flex;
  padding-top: 4px;
}

.panel-title {
  position: relative;
  height: 18px;
  background: linear-gradient(#454545, #505050);
  line-height: 20px;
  text-align: center;
}

.plot .panel-title {
  padding-right: 12px;
}

.launcher {
  position: absolute;
  right: 4px;
  bottom: 5px;
}

.large {
  flex-direction: column;
  justify-content: flex-start;
  width: 42px;
  padding-top: 3px;
  white-space: normal;
}

.large svg {
  margin-bottom: 5px;
}

.large.batch {
  width: 33px;
}

.plot .large:nth-child(3) {
  width: 52px;
}

.small-buttons button {
  height: 24px;
  gap: 5px;
  padding-left: 3px;
}

.export .large {
  width: 56px;
}

.export .large svg {
  margin: -1px 0 4px;
}

.export .large .arrow {
  margin-top: 2px;
}

.export-options {
  width: 200px;
  margin-left: 4px;
}

.select {
  display: block;
  position: relative;
  height: 24px;
}

.select::after {
  content: "";
  position: absolute;
  right: 2px;
  top: 10px;
  border: 4px solid transparent;
  border-top-color: #f0f0f0;
  border-bottom: 0;
}

.select select {
  appearance: none;
  display: block;
  width: 100%;
  height: 22px;
  padding: 0 3px;
  border: 1px solid #2e2e2e;
  border-radius: 0;
  background: linear-gradient(#757575, #585858);
  color: #f4f4f4;
  font: inherit;
}

.export-tools {
  display: flex;
  gap: 12px;
  padding: 3px 0 0 4px;
}

.export-side {
  margin-left: 8px;
}

.export-side button {
  height: 24px;
}

.badge {
  fill: #fff;
  font: bold 6px "DejaVu Sans", sans-serif;
  text-anchor: middle;
}

/* drawing tabs */
.file-tabs {
  flex: none;
  display: flex;
  height: 29px;
  padding: 3px 0 0 15px;
  border-bottom: 4px solid #5e5e5e;
  background: #383838;
}

.file-tab {
  position: relative;
  width: 134px;
  height: 22px;
  justify-content: flex-start;
  padding: 0 18px 0 17px;
  color: #b8b8b8;
}

.file-tab + .file-tab {
  margin-left: -11px;
  color: #fff;
}

.file-tab span {
  position: relative;
  flex: 1;
  text-align: left;
}

.file-tab svg {
  position: relative;
}

.file-tab .tab-shape {
  position: absolute;
  left: 0;
  top: 0;
  width: 100%;
  height: 100%;
}

.new-tab {
  margin-left: 3px;
}

/* model space */
.workspace {
  flex: 1;
  display: flex;
  min-height: 0;
}

.canvas {
  flex: 1;
  position: relative;
  overflow: hidden;
  background-color: #212830;
  background-image:
    linear-gradient(90deg, #2d3644 1px, transparent 1px),
    linear-gradient(#2d3644 1px, transparent 1px),
    linear-gradient(90deg, #252c37 1px, transparent 1px),
    linear-gradient(#252c37 1px, transparent 1px);
  background-size: 170px 170px, 170px 170px, 34px 34px, 34px 34px;
  background-position: 9px 0, 0 77px, 9px 0, 0 9px;
}

.drawing {
  position: absolute;
  left: 0;
  top: 0;
}

.axis {
  fill: #f0f0f0;
  font: 300 18px Inter, sans-serif;
  text-anchor: middle;
}

.view-label {
  position: absolute;
  left: 3px;
  top: 7px;
}

.view-buttons {
  position: absolute;
  right: 10px;
  top: 9px;
  display: flex;
  gap: 8px;
}

.view-cube {
  position: absolute;
  right: 7px;
  top: 33px;
  display: flex;
  flex-direction: column;
  align-items: center;
}

.cube-face {
  fill: #4a535e;
  font: bold 9px Roboto, sans-serif;
  text-anchor: middle;
}

.compass text {
  fill: #b4b6b8;
  font: bold 15px "Liberation Sans", sans-serif;
  text-anchor: middle;
}

.wcs {
  width: 48px;
  height: 17px;
  margin-top: 13px;
  gap: 4px;
  border: 1px solid #b0b1ba;
  border-radius: 4px;
  background: #9798a3;
  color: #565963;
  font: 11px "Liberation Sans", sans-serif;
}

.nav-bar {
  position: absolute;
  right: 4px;
  top: 193px;
  height: 212px;
  border-radius: 4px;
  background: #5b6065;
}

.ortho-tip {
  position: absolute;
  left: 957px;
  top: 277px;
  padding: 0 4px;
  border: 1px solid #111;
  background: #969799;
  color: #080808;
  line-height: 18px;
}

/* floating command line */
.command {
  position: absolute;
  left: 401px;
  bottom: 0;
  width: 564px;
  font: 12px/15px "DejaVu Sans Mono", monospace;
}

.history {
  display: flex;
  flex-direction: column;
  align-items: flex-start;
  gap: 5px;
  margin: 0 0 3px 60px;
}

.history p {
  padding: 0 2px;
  border-radius: 2px;
  background: #5c5d5e;
  color: #fff;
  white-space: nowrap;
}

.history .old {
  background: #4c4d4e;
  color: #aaa;
}

.history .mid {
  background: #5a5b5c;
  color: #d4d4d4;
}

.command-line {
  display: flex;
  height: 27px;
  border: 1px solid #777;
  background: linear-gradient(#858585, #3d3d3d);
}

.command-line > button {
  width: 22px;
}

.handle {
  width: 6px;
  margin: 4px 0 4px 3px;
  background: repeating-linear-gradient(transparent 0 1px, #555 1px 3px), repeating-linear-gradient(90deg, #ccc 0 2px, #555 2px 3px);
}

.prompt {
  flex: 1;
  display: flex;
  align-items: center;
  gap: 5px;
  padding: 0 4px;
  background: #fff;
  color: #111;
}

.prompt .arrow {
  margin-left: auto;
}

.desktop-edge {
  width: 8px;
  border-right: 1px solid #111;
  background: linear-gradient(90deg, transparent 6px, #1cc8f0 6px), linear-gradient(#a9c4ea, #e4edf9 90px, #b5cdec 91px, #b9cfee);
}

/* status bar */
.status {
  flex: none;
  display: flex;
  justify-content: space-between;
  height: 29px;
  border-top: 1px solid #4c4c4c;
  background: #383838;
}

.layout-tabs {
  display: flex;
  gap: 3px;
  padding-left: 12px;
  color: #b0b0b0;
}

.layout-tabs button {
  width: 62px;
  height: 17px;
  border-radius: 0 0 9px 9px;
  background: linear-gradient(#484848, #5c5c5c);
  border: 1px solid #666;
  border-top: 0;
}

.layout-tabs .active {
  width: 57px;
  background: linear-gradient(#555, #858585);
  color: #fff;
  font-weight: bold;
}

.layout-tabs .add {
  width: 23px;
}

.status-tools {
  display: flex;
  gap: 1px;
  padding: 0 1px 1px 0;
}

.group {
  display: flex;
  border: 1px solid #7a7a7a;
  background: #505050;
  color: #ccc;
}

.group button {
  width: 24px;
}

.group .drop {
  width: 14px;
}

.group:first-child button {
  width: 47px;
  color: #fff;
}

.group .blue {
  color: #2a94ff;
}

.group .scale {
  width: 33px;
  gap: 4px;
  color: #f0f0f0;
}

.group.wide button {
  width: 30px;
}

.glow {
  filter: drop-shadow(0 0 1px #0a5cc0);
}

/* windows taskbar */
.taskbar {
  flex: none;
  display: flex;
  gap: 4px;
  height: 40px;
  padding: 1px 0 1px;
  background: linear-gradient(90deg, #5d526c, #5a5973 220px, #625b77 340px, #7e566f 480px, #876c82 740px, #80667c 1000px, #8b6d83);
}

.taskbar > button {
  width: 58px;
}

.taskbar .start {
  width: 48px;
}

.taskbar .open {
  border: 1px solid #aaa5b8;
  background: rgba(255, 255, 255, 0.2);
}

.taskbar .current {
  border-color: #f2edf2;
  background: rgba(255, 255, 255, 0.4);
}

.tray {
  display: flex;
  align-items: center;
  gap: 8px;
  margin-left: auto;
}

.show-hidden {
  margin-right: 4px;
}

.clock {
  display: flex;
  flex-direction: column;
  align-items: center;
  justify-content: center;
  width: 92px;
  padding-right: 4px;
  line-height: 17px;
}
```
